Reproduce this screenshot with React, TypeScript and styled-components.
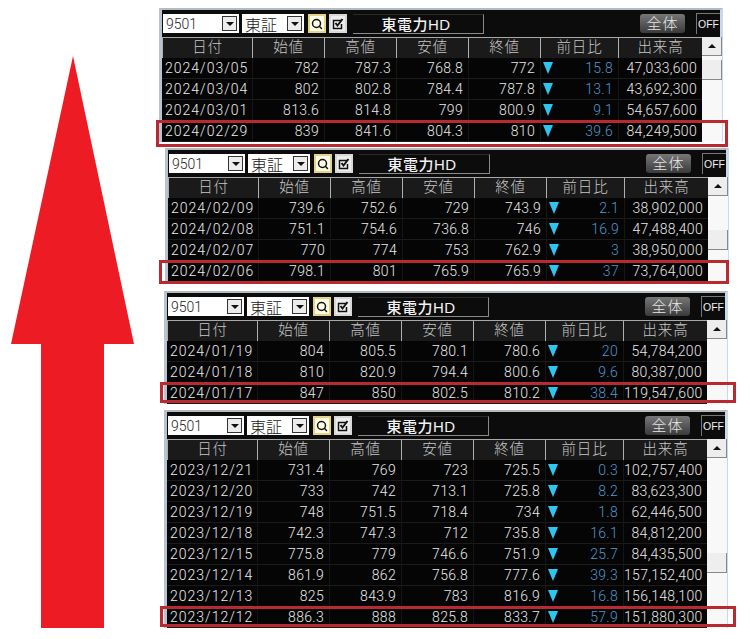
import React from 'react';
import styled, { createGlobalStyle } from 'styled-components';
import { Search } from 'lucide-react';

const GlobalStyle = createGlobalStyle`
  html, body {
    margin: 0;
    padding: 0;
    background: #fff;
  }
`;

const Page = styled.div`
  display: flex;
  width: 750px;
  height: 639px;
  overflow: hidden;
  font-family: 'Liberation Sans', 'Noto Sans CJK JP', sans-serif;
`;

const ArrowColumn = styled.div`
  flex: 0 0 155px;
`;

const Stack = styled.div`
  display: flex;
  flex-direction: column;
  padding-top: 8px;
`;

const Panel = styled.div<{ $indent: number; $gap: number }>`
  width: 564px;
  box-sizing: border-box;
  margin-left: ${(p) => p.$indent}px;
  margin-top: ${(p) => p.$gap}px;
  border-top: 2px solid #b4bcc2;
  border-left: 3px solid #b9c3cf;
  border-right: 3px solid #c9d8ea;
  background: #0c0c0c;
`;

const Toolbar = styled.div`
  display: flex;
  align-items: center;
  height: 27px;
  padding-left: 1px;
`;

const Field = styled.div<{ $width: number; $gap: number; $size: number }>`
  display: flex;
  align-items: center;
  justify-content: space-between;
  width: ${(p) => p.$width}px;
  height: 19px;
  margin-right: ${(p) => p.$gap}px;
  padding: 0 2px 0 3px;
  box-sizing: border-box;
  background: #fff;
  color: #222;
  font-family: Roboto, 'Noto Sans CJK JP', sans-serif;
  font-size: ${(p) => p.$size}px;
  font-weight: 300;
`;

const DropButton = styled.span`
  display: flex;
  align-items: center;
  justify-content: center;
  width: 15px;
  height: 15px;
  box-sizing: border-box;
  background: #ececec;
  border: 1px solid #333;

  &::after {
    content: '';
    border-left: 4px solid transparent;
    border-right: 4px solid transparent;
    border-top: 4px solid #111;
  }
`;

const IconButton = styled.span<{ $yellow?: boolean; $gap: number }>`
  display: flex;
  align-items: center;
  justify-content: center;
  width: 18px;
  height: 19px;
  margin-right: ${(p) => p.$gap}px;
  box-sizing: border-box;
  background: ${(p) => (p.$yellow ? '#fffde8' : '#ededed')};
  border: 2px solid ${(p) => (p.$yellow ? '#e6d486' : '#d8d8d8')};
`;

const TitleBox = styled.div`
  width: 131px;
  height: 20px;
  padding-right: 4px;
  box-sizing: border-box;
  border-right: 1px solid #8a8a8a;
  border-bottom: 1px solid #8a8a8a;
  border-top: 1px solid #2a2a2a;
  color: #f2f2f2;
  font-size: 15px;
  font-weight: 500;
  line-height: 19px;
  letter-spacing: 0.5px;
  text-align: center;
`;

const AllButton = styled.div`
  width: 45px;
  height: 19px;
  margin-left: auto;
  margin-right: 11px;
  border-radius: 3px;
  background: linear-gradient(#777, #3a3a3a);
  color: #e6e6e6;
  font-size: 15px;
  font-weight: 300;
  line-height: 19px;
  letter-spacing: 1px;
  text-align: center;
`;

const OffBox = styled.div`
  width: 24px;
  height: 21px;
  box-sizing: border-box;
  border-left: 1px solid #777;
  border-top: 1px solid #777;
  color: #eee;
  font-size: 10.5px;
  line-height: 20px;
  text-align: center;
`;

const Body = styled.div`
  display: flex;
`;

const Table = styled.div`
  width: 540px;
  background: #050505;
  font-family: Roboto, 'Noto Sans CJK JP', sans-serif;
  font-weight: 300;
`;

const HeaderRow = styled.div`
  display: grid;
  grid-template-columns: 90px 72px 72px 72px 72px 78px 84px;
  height: 21px;
  box-sizing: border-box;
  border-top: 1px solid #a8a8a8;
  background: #1a1a1a;
`;

const HeaderCell = styled.div`
  border-left: 1px solid #b0b0b0;
  color: #c8c8c8;
  font-size: 14.5px;
  line-height: 20px;
  letter-spacing: 0.8px;
  text-align: center;
`;

const Row = styled.div`
  position: relative;
  display: grid;
  grid-template-columns: 90px 72px 72px 72px 72px 78px 84px;
  height: 21px;
  box-sizing: border-box;
  border-bottom: 1px solid #1b1b1b;
`;

const DateCell = styled.div`
  padding-left: 3px;
  color: #ececec;
  font-size: 14px;
  line-height: 21px;
  letter-spacing: 1px;
`;

const NumCell = styled.div`
  padding-right: 5px;
  border-left: 1px solid #161616;
  color: #e8e8e8;
  font-size: 14px;
  line-height: 21px;
  letter-spacing: 0.3px;
  text-align: right;
`;

const ChangeCell = styled(NumCell)`
  display: flex;
  justify-content: space-between;
  color: #4f96cc;
  padding-left: 2px;
`;

const DownMark = styled.span`
  flex: none;
  width: 0;
  height: 0;
  margin-top: 4px;
  border-left: 5.5px solid transparent;
  border-right: 5.5px solid transparent;
  border-top: 12px solid #2cc6f0;
`;

const RedFrame = styled.div<{ $left: number; $right: number; $top: number; $bottom: number }>`
  position: absolute;
  left: ${(p) => p.$left}px;
  right: ${(p) => p.$right}px;
  top: ${(p) => p.$top}px;
  bottom: ${(p) => p.$bottom}px;
  border: 3px solid #b92a30;
`;

const ScrollColumn = styled.div`
  width: 21px;
  background: #f8f8f8;
`;

const UpButton = styled.div`
  display: flex;
  align-items: center;
  justify-content: center;
  width: 20px;
  height: 19px;
  box-sizing: border-box;
  background: #ededed;
  border-right: 1px solid #888;
  border-bottom: 1px solid #888;

  &::after {
    content: '';
    border-left: 4px solid transparent;
    border-right: 4px solid transparent;
    border-bottom: 4px solid #111;
  }
`;

const Thumb = styled.div<{ $offset: number }>`
  width: 20px;
  height: 20px;
  margin-top: ${(p) => p.$offset}px;
  box-sizing: border-box;
  background: #eee;
  border-right: 1px solid #888;
  border-bottom: 1px solid #888;
`;

const columns = ['日付', '始値', '高値', '安値', '終値', '前日比', '出来高'];

type Frame = { left: number; right: number; top: number; bottom: number };
type Sheet = {
  indent: number;
  gap: number;
  thumb?: number;
  frame: Frame;
  rows: string[][];
};

const sheets: Sheet[] = [
  {
    indent: 4,
    gap: 0,
    thumb: 4,
    frame: { left: -6, right: -26, top: -1, bottom: -6 },
    rows: [
      ['2024/03/05', '782', '787.3', '768.8', '772', '15.8', '47,033,600'],
      ['2024/03/04', '802', '802.8', '784.4', '787.8', '13.1', '43,692,300'],
      ['2024/03/01', '813.6', '814.8', '799', '800.9', '9.1', '54,657,600'],
      ['2024/02/29', '839', '841.6', '804.3', '810', '39.6', '84,249,500'],
    ],
  },
  {
    indent: 10,
    gap: 6,
    thumb: 34,
    frame: { left: -9, right: -21, top: -1, bottom: -3 },
    rows: [
      ['2024/02/09', '739.6', '752.6', '729', '743.9', '2.1', '38,902,000'],
      ['2024/02/08', '751.1', '754.6', '736.8', '746', '16.9', '47,488,400'],
      ['2024/02/07', '770', '774', '753', '762.9', '3', '38,950,000'],
      ['2024/02/06', '798.1', '801', '765.9', '765.9', '37', '73,764,000'],
    ],
  },
  {
    indent: 9,
    gap: 9,
    frame: { left: -7, right: -29, top: -1, bottom: 0 },
    rows: [
      ['2024/01/19', '804', '805.5', '780.1', '780.6', '20', '54,784,200'],
      ['2024/01/18', '810', '820.9', '794.4', '800.6', '9.6', '80,387,000'],
      ['2024/01/17', '847', '850', '802.5', '810.2', '38.4', '119,547,600'],
    ],
  },
  {
    indent: 9,
    gap: 6,
    thumb: 95,
    frame: { left: -7, right: -29, top: -1, bottom: 0 },
    rows: [
      ['2023/12/21', '731.4', '769', '723', '725.5', '0.3', '102,757,400'],
      ['2023/12/20', '733', '742', '713.1', '725.8', '8.2', '83,623,300'],
      ['2023/12/19', '748', '751.5', '718.4', '734', '1.8', '62,446,500'],
      ['2023/12/18', '742.3', '747.3', '712', '735.8', '16.1', '84,812,200'],
      ['2023/12/15', '775.8', '779', '746.6', '751.9', '25.7', '84,435,500'],
      ['2023/12/14', '861.9', '862', '756.8', '777.6', '39.3', '157,152,400'],
      ['2023/12/13', '825', '843.9', '783', '816.9', '16.8', '156,148,100'],
      ['2023/12/12', '886.3', '888', '825.8', '833.7', '57.9', '151,880,300'],
    ],
  },
];

const BigArrow = () => (
  <svg width="155" height="639" viewBox="0 0 155 639">
    <polygon points="73,56 134,344 104,344 104,628 41,628 41,344 11,344" fill="#ed1c24" />
  </svg>
);

const EditIcon = () => (
  <svg width="12" height="12" viewBox="0 0 12 12" fill="none" stroke="#111">
    <path d="M9 2.5H1.5v8h8V6" strokeWidth="1.5" />
    <path d="M3.5 5l2 2.5L10.5 1" strokeWidth="2" />
  </svg>
);

const StockPanel = ({ sheet }: { sheet: Sheet }) => {
  const lastIndex = sheet.rows.length - 1;
  return (
    <Panel $indent={sheet.indent} $gap={sheet.gap}>
      <Toolbar>
        <Field $width={76} $gap={3} $size={14}>
          9501
          <DropButton />
        </Field>
        <Field $width={62} $gap={4} $size={16}>
          東証
          <DropButton />
        </Field>
        <IconButton $yellow $gap={3}>
          <Search size={12} strokeWidth={3} color="#111" />
        </IconButton>
        <IconButton $gap={6}>
          <EditIcon />
        </IconButton>
        <TitleBox>東電力HD</TitleBox>
        <AllButton>全体</AllButton>
        <OffBox>OFF</OffBox>
      </Toolbar>
      <Body>
        <Table>
          <HeaderRow>
            {columns.map((name) => (
              <HeaderCell key={name}>{name}</HeaderCell>
            ))}
          </HeaderRow>
          {sheet.rows.map((row, index) => (
            <Row key={row[0]}>
              <DateCell>{row[0]}</DateCell>
              <NumCell>{row[1]}</NumCell>
              <NumCell>{row[2]}</NumCell>
              <NumCell>{row[3]}</NumCell>
              <NumCell>{row[4]}</NumCell>
              <ChangeCell>
                <DownMark />
                {row[5]}
              </ChangeCell>
              <NumCell>{row[6]}</NumCell>
              {index === lastIndex && (
                <RedFrame
                  $left={sheet.frame.left}
                  $right={sheet.frame.right}
                  $top={sheet.frame.top}
                  $bottom={sheet.frame.bottom}
                />
              )}
            </Row>
          ))}
        </Table>
        <ScrollColumn>
          <UpButton />
          {sheet.thumb !== undefined && <Thumb $offset={sheet.thumb} />}
        </ScrollColumn>
      </Body>
    </Panel>
  );
};

const App = () => (
  <Page>
    <GlobalStyle />
    <ArrowColumn>
      <BigArrow />
    </ArrowColumn>
    <Stack>
      {sheets.map((sheet) => (
        <StockPanel key={sheet.rows[0][0]} sheet={sheet} />
      ))}
    </Stack>
  </Page>
);

export default App;
